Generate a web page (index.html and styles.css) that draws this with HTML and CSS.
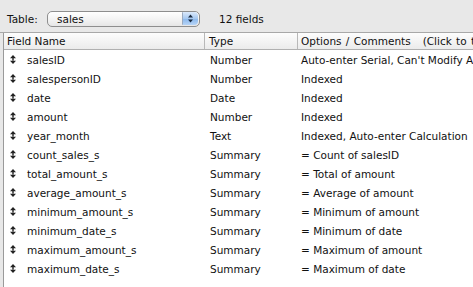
FILE: index.html
```html
<!DOCTYPE html>
<html>
<head>
<meta charset="utf-8">
<link rel="stylesheet" href="styles.css">
</head>
<body>
<div class="toolbar">
  <span class="label">Table:</span>
  <div class="popup">
    <span class="popup-text">sales</span>
    <span class="stepper">
      <svg width="7" height="11" viewBox="0 0 7 11"><path d="M3.5 1.5 L6 4.5 H1 Z M3.5 9.5 L6 6.5 H1 Z" fill="#1a2a40"/></svg>
    </span>
  </div>
  <span class="count">12 fields</span>
</div>
<div class="list">
  <div class="row head">
    <div class="c1">Field Name</div>
    <div class="c2">Type</div>
    <div class="c3">Options / Comments<span class="hint">(Click to toggle)</span></div>
  </div>
  <div class="row"><div class="c1"><span class="grip"><svg width="6" height="9" viewBox="0 0 6 9"><path d="M3 0 L6 3.3 H0 Z M3 9 L6 5.7 H0 Z M2.3 3 H3.7 V6 H2.3 Z" fill="#222"/></svg></span>salesID</div><div class="c2">Number</div><div class="c3">Auto-enter Serial, Can't Modify Auto</div></div>
  <div class="row"><div class="c1"><span class="grip"><svg width="6" height="9" viewBox="0 0 6 9"><path d="M3 0 L6 3.3 H0 Z M3 9 L6 5.7 H0 Z M2.3 3 H3.7 V6 H2.3 Z" fill="#222"/></svg></span>salespersonID</div><div class="c2">Number</div><div class="c3">Indexed</div></div>
  <div class="row"><div class="c1"><span class="grip"><svg width="6" height="9" viewBox="0 0 6 9"><path d="M3 0 L6 3.3 H0 Z M3 9 L6 5.7 H0 Z M2.3 3 H3.7 V6 H2.3 Z" fill="#222"/></svg></span>date</div><div class="c2">Date</div><div class="c3">Indexed</div></div>
  <div class="row"><div class="c1"><span class="grip"><svg width="6" height="9" viewBox="0 0 6 9"><path d="M3 0 L6 3.3 H0 Z M3 9 L6 5.7 H0 Z M2.3 3 H3.7 V6 H2.3 Z" fill="#222"/></svg></span>amount</div><div class="c2">Number</div><div class="c3">Indexed</div></div>
  <div class="row"><div class="c1"><span class="grip"><svg width="6" height="9" viewBox="0 0 6 9"><path d="M3 0 L6 3.3 H0 Z M3 9 L6 5.7 H0 Z M2.3 3 H3.7 V6 H2.3 Z" fill="#222"/></svg></span>year_month</div><div class="c2">Text</div><div class="c3">Indexed, Auto-enter Calculation</div></div>
  <div class="row"><div class="c1"><span class="grip"><svg width="6" height="9" viewBox="0 0 6 9"><path d="M3 0 L6 3.3 H0 Z M3 9 L6 5.7 H0 Z M2.3 3 H3.7 V6 H2.3 Z" fill="#222"/></svg></span>count_sales_s</div><div class="c2">Summary</div><div class="c3">= Count of salesID</div></div>
  <div class="row"><div class="c1"><span class="grip"><svg width="6" height="9" viewBox="0 0 6 9"><path d="M3 0 L6 3.3 H0 Z M3 9 L6 5.7 H0 Z M2.3 3 H3.7 V6 H2.3 Z" fill="#222"/></svg></span>total_amount_s</div><div class="c2">Summary</div><div class="c3">= Total of amount</div></div>
  <div class="row"><div class="c1"><span class="grip"><svg width="6" height="9" viewBox="0 0 6 9"><path d="M3 0 L6 3.3 H0 Z M3 9 L6 5.7 H0 Z M2.3 3 H3.7 V6 H2.3 Z" fill="#222"/></svg></span>average_amount_s</div><div class="c2">Summary</div><div class="c3">= Average of amount</div></div>
  <div class="row"><div class="c1"><span class="grip"><svg width="6" height="9" viewBox="0 0 6 9"><path d="M3 0 L6 3.3 H0 Z M3 9 L6 5.7 H0 Z M2.3 3 H3.7 V6 H2.3 Z" fill="#222"/></svg></span>minimum_amount_s</div><div class="c2">Summary</div><div class="c3">= Minimum of amount</div></div>
  <div class="row"><div class="c1"><span class="grip"><svg width="6" height="9" viewBox="0 0 6 9"><path d="M3 0 L6 3.3 H0 Z M3 9 L6 5.7 H0 Z M2.3 3 H3.7 V6 H2.3 Z" fill="#222"/></svg></span>minimum_date_s</div><div class="c2">Summary</div><div class="c3">= Minimum of date</div></div>
  <div class="row"><div class="c1"><span class="grip"><svg width="6" height="9" viewBox="0 0 6 9"><path d="M3 0 L6 3.3 H0 Z M3 9 L6 5.7 H0 Z M2.3 3 H3.7 V6 H2.3 Z" fill="#222"/></svg></span>maximum_amount_s</div><div class="c2">Summary</div><div class="c3">= Maximum of amount</div></div>
  <div class="row"><div class="c1"><span class="grip"><svg width="6" height="9" viewBox="0 0 6 9"><path d="M3 0 L6 3.3 H0 Z M3 9 L6 5.7 H0 Z M2.3 3 H3.7 V6 H2.3 Z" fill="#222"/></svg></span>maximum_date_s</div><div class="c2">Summary</div><div class="c3">= Maximum of date</div></div>
</div>
</body>
</html>
```

FILE: styles.css
```css
html, body {
  margin: 0;
  padding: 0;
  width: 473px;
  height: 287px;
  overflow: hidden;
  background: #e8e8e8;
  font-family: "Lucida Grande", "DejaVu Sans", sans-serif;
  font-size: 10.5px;
  color: #111;
}
.toolbar {
  height: 33px;
  display: flex;
  align-items: center;
  padding: 5px 0 0 7px;
  box-sizing: border-box;
  border-bottom: 1px solid #a8a8a8;
}
.label {
  width: 40px;
}
.popup {
  width: 150px;
  height: 14px;
  border: 1px solid #8e8e8e;
  border-radius: 5px;
  background: linear-gradient(#ffffff, #f4f4f4 50%, #e6e6e6);
  display: flex;
  align-items: center;
  padding-right: 1px;
}
.popup-text {
  flex: 1;
  padding-left: 9px;
}
.stepper {
  width: 15px;
  height: 13px;
  display: flex;
  align-items: center;
  justify-content: center;
  border-radius: 1px 4px 4px 1px;
  background: linear-gradient(#dbe9fb, #a7c9f1 50%, #8ab7ec 51%, #b6d4f6);
  border-left: 1px solid #9aaac0;
}
.count {
  margin-left: 19px;
}
.list {
  margin-left: 3px;
  border-left: 1px solid #9a9a9a;
  background: #fff;
  height: 254px;
}
.row {
  display: flex;
  height: 19px;
  align-items: center;
  white-space: nowrap;
}
.row.head {
  height: 16px;
  background: linear-gradient(#fdfdfd, #ebebeb);
  border-bottom: 1px solid #b0b0b0;
}
.c1 {
  width: 201px;
  padding-left: 3px;
  box-sizing: border-box;
  display: flex;
  align-items: center;
}
.c2 {
  width: 93px;
  padding-left: 5px;
  box-sizing: border-box;
}
.c3 {
  flex: 1;
  padding-left: 3px;
  overflow: hidden;
}
.head .c1, .head .c2 {
  border-right: 1px solid #b8b8b8;
  height: 16px;
  line-height: 17px;
}
.head .c2 {
  padding-left: 4px;
}
.head .c3 {
  word-spacing: 1px;
  line-height: 17px;
}
.hint {
  margin-left: 12px;
}
.grip {
  width: 20px;
  padding-left: 3px;
  box-sizing: border-box;
  display: flex;
  align-items: center;
}
```
